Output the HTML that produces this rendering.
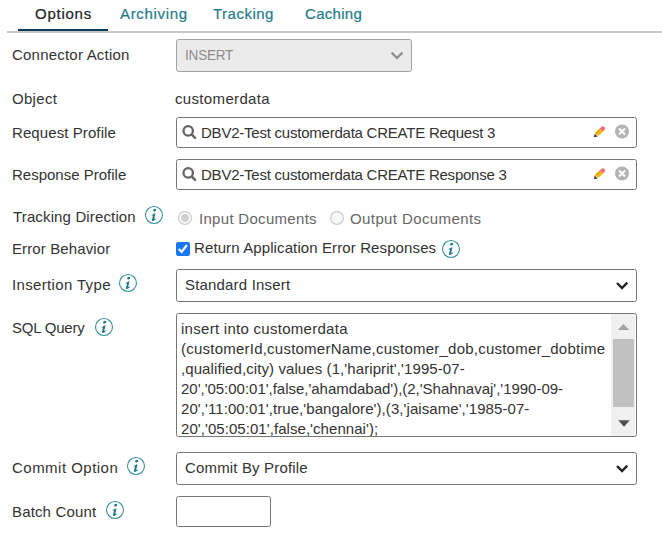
<!DOCTYPE html>
<html><head><meta charset="utf-8">
<style>
*{box-sizing:border-box;margin:0;padding:0}
html,body{width:662px;height:541px;background:#fff;overflow:hidden}
body{position:relative;font-family:"Liberation Sans",sans-serif;font-size:15px;color:#333}
.t{position:absolute;white-space:pre;line-height:20px;height:20px}
.tab{color:#1f7b89;font-weight:400;-webkit-text-stroke:0.2px #1f7b89}
.tab.act{color:#222;-webkit-text-stroke:0.2px #222}
.box{position:absolute;border:1px solid #777;border-radius:2.5px;background:#fff}
.box.dis{background:#ebebeb;border-color:#a3a3a3}
svg{position:absolute;overflow:visible}
</style></head><body>

<!-- tabs -->
<div style="position:absolute;left:7px;top:31px;width:655px;height:2px;background:#c8c8c8"></div>
<div style="position:absolute;left:18px;top:29px;width:90px;height:2px;background:#0c3a57"></div>
<div class="t tab act" style="left:35px;top:4px;letter-spacing:0.75px">Options</div>
<div class="t tab" style="left:120px;top:4px;letter-spacing:0.67px">Archiving</div>
<div class="t tab" style="left:213px;top:4px;letter-spacing:0.5px">Tracking</div>
<div class="t tab" style="left:305px;top:4px;letter-spacing:0.3px">Caching</div>

<!-- labels -->
<div class="t" style="left:12px;top:45px;letter-spacing:0.21px">Connector Action</div>
<div class="t" style="left:12px;top:89px;letter-spacing:0.3px">Object</div>
<div class="t" style="left:12px;top:123px;letter-spacing:0.09px">Request Profile</div>
<div class="t" style="left:12px;top:165px">Response Profile</div>
<div class="t" style="left:13px;top:207px;letter-spacing:0.14px">Tracking Direction</div>
<div class="t" style="left:12px;top:239px;letter-spacing:0.12px">Error Behavior</div>
<div class="t" style="left:12px;top:275px;letter-spacing:0.35px">Insertion Type</div>
<div class="t" style="left:12px;top:318px;letter-spacing:-0.22px">SQL Query</div>
<div class="t" style="left:12px;top:458px;letter-spacing:0.48px">Commit Option</div>
<div class="t" style="left:12px;top:502px;letter-spacing:0.15px">Batch Count</div>

<!-- info icons -->
<svg width="0" height="0" style="left:0;top:0">
 <defs>
  <g id="info">
   <circle cx="10" cy="10" r="8.5" fill="none" stroke="#35909c" stroke-width="1.1"/>
   <ellipse cx="10.7" cy="5.2" rx="1.6" ry="1.25" transform="rotate(-25 10.7 5.2)" fill="#1d7a87"/>
   <path d="M7.2 10.6 C8.4 9.6 9.9 8.6 11.5 8.3 L10.2 14.0 C10.9 13.9 11.8 13.4 12.5 12.9 C11.6 14.6 10.2 15.8 8.8 15.9 C8.0 15.9 7.8 15.3 8.0 14.6 L9.0 10.7 C8.5 10.5 7.8 10.5 7.2 10.6 Z" fill="#1d7a87"/>
  </g>
 </defs>
</svg>
<svg style="left:144px;top:205px" width="20" height="20" viewBox="0 0 20 20"><use href="#info"/></svg>
<svg style="left:441px;top:239px" width="20" height="20" viewBox="0 0 20 20"><use href="#info"/></svg>
<svg style="left:118px;top:273px" width="20" height="20" viewBox="0 0 20 20"><use href="#info"/></svg>
<svg style="left:94px;top:317px" width="20" height="20" viewBox="0 0 20 20"><use href="#info"/></svg>
<svg style="left:126px;top:456px" width="20" height="20" viewBox="0 0 20 20"><use href="#info"/></svg>
<svg style="left:105px;top:500px" width="20" height="20" viewBox="0 0 20 20"><use href="#info"/></svg>

<!-- connector action -->
<div class="box dis" style="left:176px;top:39px;width:236px;height:33px"></div>
<div class="t" style="left:185px;top:45px;color:#8c8c8c;letter-spacing:-0.2px;transform:scaleX(0.9);transform-origin:0 0">INSERT</div>
<svg style="left:0;top:0" width="662" height="541"><path d="M391.5 52.5 L397 58 L402.5 52.5" fill="none" stroke="#8a8a8a" stroke-width="2.2"/></svg>

<!-- object -->
<div class="t" style="left:175px;top:89px;letter-spacing:0.34px">customerdata</div>

<!-- request / response profile -->
<div class="box" style="left:176px;top:117px;width:461px;height:31px"></div>
<div class="t" style="left:201px;top:123px;letter-spacing:-0.23px">DBV2-Test customerdata CREATE Request 3</div>
<div class="box" style="left:176px;top:159px;width:461px;height:31px"></div>
<div class="t" style="left:201px;top:165px;letter-spacing:-0.23px">DBV2-Test customerdata CREATE Response 3</div>
<svg style="left:0;top:0" width="662" height="541">
 <g id="prof">
  <circle cx="188.2" cy="130.9" r="4.7" fill="none" stroke="#636363" stroke-width="2.3"/>
  <path d="M191.9 134.6 L195.1 137.8" stroke="#636363" stroke-width="2.4" stroke-linecap="round"/>
  <g transform="translate(593.9 137.2) rotate(-44)">
   <path d="M0 0 L3.2 -2.15 L3.2 2.15 Z" fill="#333"/>
   <rect x="3.2" y="-2.2" width="0.8" height="4.4" fill="#e0d8c8"/>
   <rect x="4.0" y="-2.2" width="6.4" height="4.4" fill="#f3b400"/>
   <rect x="4.0" y="-2.2" width="6.4" height="1.1" fill="#e39e00"/>
   <path d="M10.4 -2.2 H12.4 A2.2 2.2 0 0 1 12.4 2.2 H10.4 Z" fill="#f4697a"/>
  </g>
  <circle cx="622" cy="131.5" r="7" fill="#b3b3b3"/>
  <path d="M619 128.5 L625 134.5 M625 128.5 L619 134.5" stroke="#fff" stroke-width="2"/>
 </g>
 <use href="#prof" transform="translate(0 42)"/>
</svg>

<!-- tracking direction radios -->
<svg style="left:0;top:0" width="662" height="541">
 <circle cx="185" cy="218" r="6.4" fill="#fff" stroke="#cbcbcb" stroke-width="1.2"/>
 <circle cx="185" cy="218" r="3.9" fill="#cfcfcf"/>
 <circle cx="337" cy="218" r="6.4" fill="#f7f7f7" stroke="#cbcbcb" stroke-width="1.2"/>
</svg>
<div class="t" style="left:199px;top:209px;color:#666;letter-spacing:0.3px">Input Documents</div>
<div class="t" style="left:350px;top:209px;color:#666;letter-spacing:0.4px">Output Documents</div>

<!-- error behavior -->
<svg style="left:176px;top:242px" width="14" height="14" viewBox="0 0 14 14">
 <rect x="0" y="0" width="14" height="14" rx="2.2" fill="#1877f6"/>
 <path d="M2.8 7.1 L5.7 9.9 L10.9 3.0" fill="none" stroke="#fff" stroke-width="2.2"/>
</svg>
<div class="t" style="left:194px;top:238px;letter-spacing:0.11px">Return Application Error Responses</div>

<!-- insertion type -->
<div class="box" style="left:176px;top:269px;width:461px;height:33px"></div>
<div class="t" style="left:185px;top:275px;letter-spacing:0.18px">Standard Insert</div>
<svg style="left:0;top:0" width="662" height="541"><path d="M617 283 L622 288 L627.3 282.7" fill="none" stroke="#222" stroke-width="2.4"/></svg>

<!-- textarea -->
<div class="box" style="left:176px;top:313px;width:461px;height:124px"></div>
<div style="position:absolute;left:177px;top:314px;width:434px;height:122px;overflow:hidden">
<div class="t" style="left:4px;top:5px;letter-spacing:0.28px">insert into customerdata</div>
<div class="t" style="left:4px;top:25px;letter-spacing:0.23px">(customerId,customerName,customer_dob,customer_dobtime</div>
<div class="t" style="left:4px;top:45px;letter-spacing:0.09px">,qualified,city) values (1,'hariprit','1995-07-</div>
<div class="t" style="left:4px;top:65px;letter-spacing:-0.02px">20','05:00:01',false,'ahamdabad'),(2,'Shahnavaj','1990-09-</div>
<div class="t" style="left:4px;top:85px;letter-spacing:0.07px">20','11:00:01',true,'bangalore'),(3,'jaisame','1985-07-</div>
<div class="t" style="left:4px;top:105px;letter-spacing:0.06px">20','05:05:01',false,'chennai');</div>
</div>
<div style="position:absolute;left:611px;top:314px;width:24px;height:122px;background:#f0f0f0"></div>
<div style="position:absolute;left:613px;top:339px;width:21px;height:68px;background:#c1c1c1"></div>
<svg style="left:0;top:0" width="662" height="541">
 <path d="M617.8 330 L623.5 324 L629.2 330 Z" fill="#a3a3a3"/>
 <path d="M618.3 420.3 L629.8 420.3 L624 426.8 Z" fill="#505050"/>
</svg>

<!-- commit option -->
<div class="box" style="left:176px;top:452px;width:461px;height:33px"></div>
<div class="t" style="left:185px;top:458px;letter-spacing:0.16px">Commit By Profile</div>
<svg style="left:0;top:0" width="662" height="541"><path d="M617 466 L622 471 L627.3 465.7" fill="none" stroke="#222" stroke-width="2.4"/></svg>

<!-- batch count -->
<div class="box" style="left:176px;top:496px;width:95px;height:31px"></div>

</body></html>
